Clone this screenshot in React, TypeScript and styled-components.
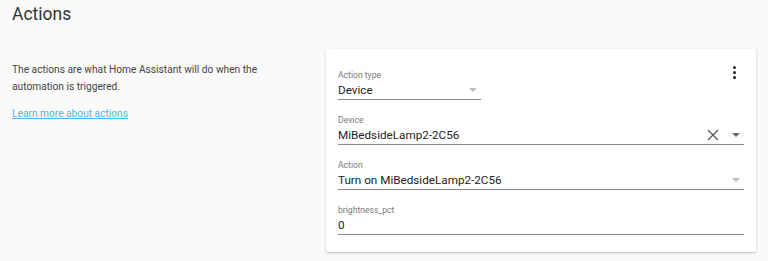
import React from 'react'
import styled, { createGlobalStyle } from 'styled-components'

const GlobalStyle = createGlobalStyle`
  html, body {
    margin: 0;
    padding: 0;
    background: #fafafa;
    font-family: Roboto, 'Noto Sans', sans-serif;
  }
`

const Page = styled.div`
  width: 768px;
  height: 261px;
  overflow: hidden;
  box-sizing: border-box;
  padding: 2px 12px 0 12px;
`

const Title = styled.h1`
  margin: 0;
  font-size: 17.5px;
  font-weight: 400;
  line-height: 24px;
  color: #333;
`

const Section = styled.div`
  display: flex;
  align-items: flex-start;
  gap: 14px;
  margin-top: 23px;
`

const Intro = styled.div`
  width: 300px;
  padding-top: 12px;
  color: #444;

  p {
    width: 275px;
    margin: 0 0 7px 0;
    font-size: 10.2px;
    line-height: 17px;
  }

  a {
    font-size: 10.2px;
    line-height: 17px;
    color: #4fb3f0;
    text-decoration: underline;
  }
`

const Card = styled.div`
  position: relative;
  width: 430px;
  box-sizing: border-box;
  background: #fff;
  border-radius: 2px;
  box-shadow: 0 1px 3px rgba(0, 0, 0, 0.18), 0 1px 1px rgba(0, 0, 0, 0.08);
  padding: 20px 12px 17px 12px;
  display: flex;
  flex-direction: column;
  gap: 14px;
`

const MenuButton = styled.div`
  position: absolute;
  top: 17px;
  right: 20px;
  display: flex;
  flex-direction: column;
  gap: 2px;

  span {
    width: 3px;
    height: 3px;
    border-radius: 50%;
    background: #222;
  }
`

const Field = styled.div<{ $width?: number }>`
  width: ${(p) => (p.$width ? `${p.$width}px` : '100%')};
  border-bottom: 1px solid #8a8a8a;
`

const Label = styled.div`
  font-size: 8.6px;
  line-height: 12px;
  color: #7a7a7a;
`

const ValueRow = styled.div`
  display: flex;
  align-items: center;
  height: 18px;
  font-size: 11.7px;
  color: #222;

  .value {
    flex: 1;
  }
`

const Arrow = styled.span<{ $dim?: boolean }>`
  width: 0;
  height: 0;
  margin: 0 4px 0 8px;
  border-left: 4px solid transparent;
  border-right: 4px solid transparent;
  border-top: 4px solid ${(p) => (p.$dim ? '#bdbdbd' : '#666')};
`

const ClearIcon = () => (
  <svg width="14" height="14" viewBox="0 0 14 14" style={{ marginRight: 4 }}>
    <path d="M2 2 L12 12 M12 2 L2 12" stroke="#555" strokeWidth="1.3" fill="none" />
  </svg>
)

export default function App() {
  return (
    <>
      <GlobalStyle />
      <Page>
        <Title>Actions</Title>
        <Section>
          <Intro>
            <p>
              The actions are what Home Assistant will do when the automation is triggered.
            </p>
            <a href="#">Learn more about actions</a>
          </Intro>
          <Card>
            <MenuButton>
              <span />
              <span />
              <span />
            </MenuButton>
            <Field $width={143}>
              <Label>Action type</Label>
              <ValueRow>
                <span className="value">Device</span>
                <Arrow $dim />
              </ValueRow>
            </Field>
            <Field>
              <Label>Device</Label>
              <ValueRow>
                <span className="value">MiBedsideLamp2-2C56</span>
                <ClearIcon />
                <Arrow />
              </ValueRow>
            </Field>
            <Field>
              <Label>Action</Label>
              <ValueRow>
                <span className="value">Turn on MiBedsideLamp2-2C56</span>
                <Arrow $dim />
              </ValueRow>
            </Field>
            <Field>
              <Label>brightness_pct</Label>
              <ValueRow>
                <span className="value">0</span>
              </ValueRow>
            </Field>
          </Card>
        </Section>
      </Page>
    </>
  )
}
